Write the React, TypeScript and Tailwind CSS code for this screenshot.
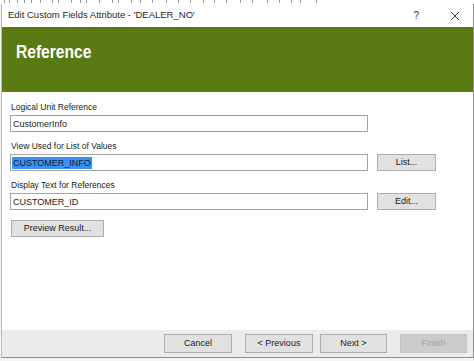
import React from "react";

const btn =
  "flex items-center justify-center border border-[#adadad] bg-[#e1e1e1] text-[9px] text-[#1a1a1a]";

// stubs of the window behind, peeking above the dialog
const TICKS = [4, 9, 17, 24, 31, 40, 52, 58, 71, 80, 86, 99, 112, 118, 131, 140, 152, 166, 178, 190, 203, 214, 226, 240, 252, 267, 279, 291, 300, 316];

function Field({
  label,
  value,
  selected,
  action,
}: {
  label: string;
  value: string;
  selected?: boolean;
  action?: string;
}) {
  return (
    <div className="flex flex-col">
      <div className="h-[11px] pl-[1px] text-[8.5px] leading-[11px] text-[#1a1a1a]">{label}</div>
      <div className="mt-[2px] flex items-center gap-[9px]">
        <div className="flex h-[17px] w-[358px] items-center border border-[#a3a3a3] bg-white pl-[1px]">
          {selected ? (
            <span className="bg-[#3d90ee] px-[1px] text-[9px] leading-[12px] text-[#0b1c4a]">{value}</span>
          ) : (
            <span className="px-[1px] text-[9px] leading-[12px] text-[#1a1a1a]">{value}</span>
          )}
        </div>
        {action && <div className={`${btn} h-[17px] w-[59px]`}>{action}</div>}
      </div>
    </div>
  );
}

export default function App() {
  return (
    <div className="h-[361px] w-[474px] overflow-hidden bg-[#f4f4f4] font-['Liberation_Sans',Arial,sans-serif]">
      <div className="h-[4px] bg-white">
        <svg width="474" height="4" viewBox="0 0 474 4">
          {TICKS.map((x) => (
            <rect key={x} x={x} y={0} width={1} height={3} fill="#9a9a9a" />
          ))}
        </svg>
      </div>
      <div className="ml-[1px] flex w-[473px] flex-col border-x border-b border-l-[#bdbdbd] border-r-[#8e8e8e] border-b-[#8e8e8e]">
        <div className="flex h-[23px] items-center bg-white">
          <span className="pl-[6px] text-[9.5px] text-[#1f1f1f]">Edit Custom Fields Attribute - 'DEALER_NO'</span>
          <span className="ml-auto mr-[31px] text-[10px] text-[#333]">?</span>
          <svg width="10" height="10" viewBox="0 0 10 10" className="mr-[13px]">
            <path d="M1 1L9 9M9 1L1 9" stroke="#333" strokeWidth="1" />
          </svg>
        </div>
        <div className="flex h-[65px] items-start bg-[#5a7a14] pl-[14px] pt-[14px]">
          <span className="inline-block origin-left scale-x-[0.82] text-[19px] font-bold leading-[22px] text-white">
            Reference
          </span>
        </div>
        <div className="flex h-[238px] flex-col gap-[9px] bg-white pl-[8px] pt-[10px]">
          <Field label="Logical Unit Reference" value="CustomerInfo" />
          <Field label="View Used for List of Values" value="CUSTOMER_INFO" selected action="List..." />
          <Field label="Display Text for References" value="CUSTOMER_ID" action="Edit..." />
          <div className={`${btn} mt-[1px] ml-[1px] h-[17px] w-[93px]`}>Preview Result...</div>
        </div>
        <div className="flex h-[27px] items-start bg-[#ebebeb] pl-[162px] pt-[4px]">
          <div className={`${btn} h-[19px] w-[68px]`}>Cancel</div>
          <div className={`${btn} ml-[13px] h-[19px] w-[68px]`}>&lt; Previous</div>
          <div className={`${btn} ml-[7px] h-[19px] w-[67px]`}>Next &gt;</div>
          <div className="ml-[13px] flex h-[19px] w-[67px] items-center justify-center border border-[#c4c4c4] bg-[#cccccc] text-[9px] text-[#a2a2a2]">
            Finish
          </div>
        </div>
      </div>
    </div>
  );
}
